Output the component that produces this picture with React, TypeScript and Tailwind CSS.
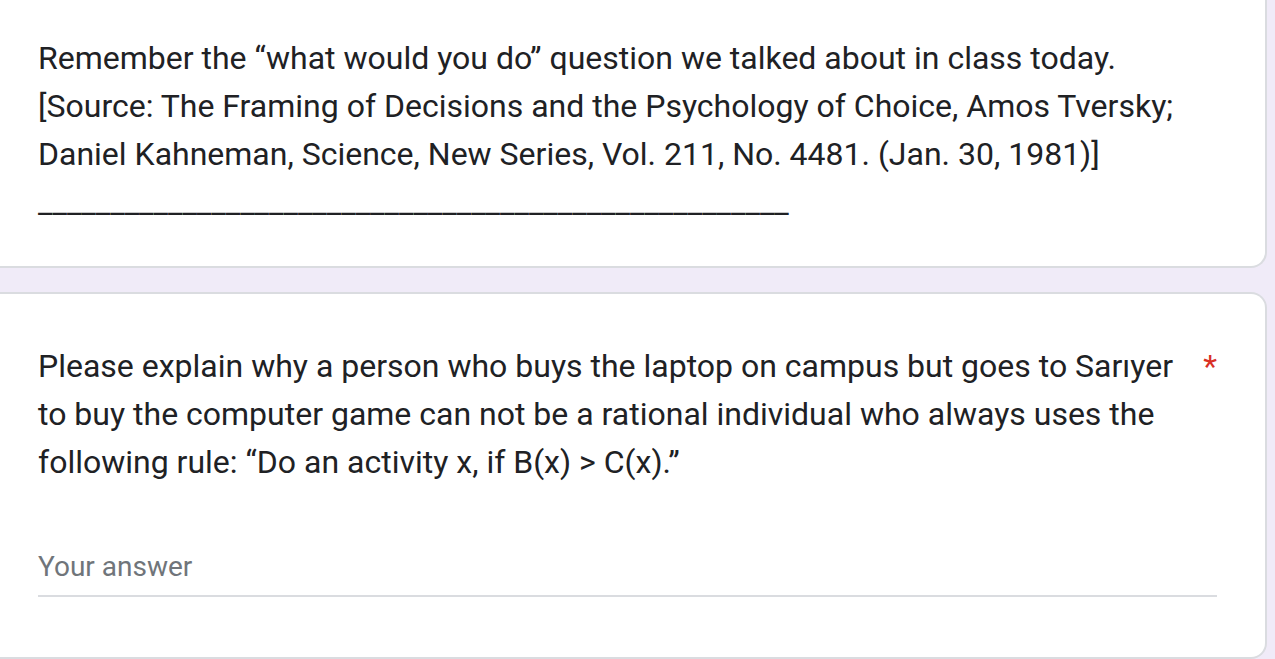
export default function App() {
  const font = { fontFamily: "Roboto, 'Noto Sans', Arial, sans-serif" };

  return (
    <div className="min-h-screen bg-[#f0ebf8] pr-[8px] text-[#202124]" style={font}>
      {/* description card (top cut off) */}
      <section className="rounded-br-[16px] border-2 border-l-0 border-t-0 border-[#dadce0] bg-white pb-[40px] pl-[38px] pr-[48px] pt-[34px] text-[32px] leading-[48px]">
        <p>
          Remember the “what would you do” question we talked about in class today.
          <br />
          [Source: The Framing of Decisions and the Psychology of Choice, Amos Tversky;
          <br />
          Daniel Kahneman, Science, New Series, Vol. 211, No. 4481. (Jan. 30, 1981)]
          <br />
          ____________________________________________________
        </p>
      </section>

      {/* question card */}
      <section className="mt-[24px] rounded-r-[16px] border-2 border-l-0 border-[#dadce0] bg-white pb-[60px] pl-[38px] pr-[48px] pt-[48px]">
        <div className="flex items-start text-[32px] leading-[48px]">
          <p className="flex-1">
            Please explain why a person who buys the laptop on campus but goes to Sarıyer to buy
            the computer game can not be a rational individual who always uses the following rule:
            “Do an activity x, if B(x) &gt; C(x).”
          </p>
          <span className="pl-[16px] text-[#d93025]">*</span>
        </div>

        <div className="mt-[57px] border-b-2 border-[#dadce0] pb-[4px]">
          <span className="text-[28px] leading-[48px] text-[#70757a]">Your answer</span>
        </div>
      </section>
    </div>
  );
}
